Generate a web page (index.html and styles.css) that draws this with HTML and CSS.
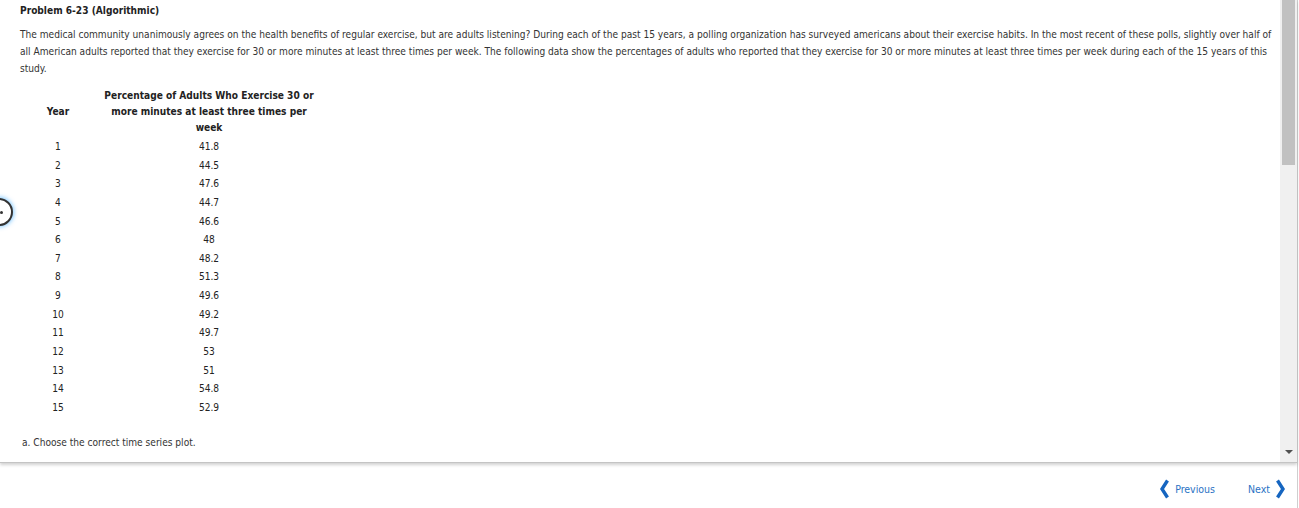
FILE: index.html
```html
<!DOCTYPE html>
<html>
<head>
  <meta charset="utf-8">
  <link rel="stylesheet" href="styles.css">
  <title>Problem 6-23 (Algorithmic)</title>
</head>
<body>

<div class="page">
  <div class="frame">
    <div class="content">
      <div class="title">Problem 6-23 (Algorithmic)</div>
      <p class="intro">The medical community unanimously agrees on the health benefits of regular exercise, but are adults listening? During each of the past 15 years, a polling organization has surveyed americans about their exercise habits. In the most recent of these polls, slightly over half of all American adults reported that they exercise for 30 or more minutes at least three times per week. The following data show the percentages of adults who reported that they exercise for 30 or more minutes at least three times per week during each of the 15 years of this study.</p>

      <table class="data">
        <thead>
          <tr>
            <th class="yearCol">Year</th>
            <th class="pctCol">Percentage of Adults Who Exercise 30 or more minutes at least three times per week</th>
          </tr>
        </thead>
        <tbody>
          <tr><td>1</td><td>41.8</td></tr>
          <tr><td>2</td><td>44.5</td></tr>
          <tr><td>3</td><td>47.6</td></tr>
          <tr><td>4</td><td>44.7</td></tr>
          <tr><td>5</td><td>46.6</td></tr>
          <tr><td>6</td><td>48</td></tr>
          <tr><td>7</td><td>48.2</td></tr>
          <tr><td>8</td><td>51.3</td></tr>
          <tr><td>9</td><td>49.6</td></tr>
          <tr><td>10</td><td>49.2</td></tr>
          <tr><td>11</td><td>49.7</td></tr>
          <tr><td>12</td><td>53</td></tr>
          <tr><td>13</td><td>51</td></tr>
          <tr><td>14</td><td>54.8</td></tr>
          <tr><td>15</td><td>52.9</td></tr>
        </tbody>
      </table>

      <p class="question">a. Choose the correct time series plot.</p>
    </div>

    <div class="scrollbar">
      <div class="thumb"></div>
      <div class="arrowDown"></div>
    </div>

    <div class="focusRing"><span class="dot"></span></div>
  </div>

  <div class="navBar">
    <a class="navLink">
      <svg class="chev" width="9" height="20" viewBox="0 0 9 20"><polyline points="7.5,1.5 2,10 7.5,18.5" fill="none" stroke="#1565c0" stroke-width="3.4" stroke-linejoin="miter"/></svg>
      <span>Previous</span>
    </a>
    <a class="navLink next">
      <span>Next</span>
      <svg class="chev" width="9" height="20" viewBox="0 0 9 20"><polyline points="1.5,1.5 7,10 1.5,18.5" fill="none" stroke="#1565c0" stroke-width="3.4" stroke-linejoin="miter"/></svg>
    </a>
  </div>
</div>

</body>
</html>
```

FILE: styles.css
```css
html, body {
  margin: 0;
  height: 100%;
  background-color: #ffffff;
}

body {
  font-family: 'DejaVu Sans Condensed', 'DejaVu Sans', sans-serif;
  font-size: 10.1px;
  color: #333333;
}

.page {
  width: 1297px;
  height: 508px;
  border-right: 1px solid #cfcfcf;
  display: flex;
  flex-direction: column;
}

.frame {
  position: relative;
  height: 462px;
  display: flex;
  border-bottom: 1px solid #c4c4c4;
  box-shadow: 0 2px 3px rgba(0, 0, 0, 0.18);
  overflow: hidden;
  z-index: 1;
}

.content {
  flex: 1;
  padding: 2px 3px 0 20px;
}

.title {
  font-weight: bold;
  line-height: 17px;
  color: #222222;
}

.intro {
  margin: 7px 0 0 0;
  line-height: 17px;
}

.data {
  border-collapse: collapse;
  margin-top: 11px;
}

.data th {
  font-weight: bold;
  line-height: 16px;
  padding: 0 0 2px 0;
  color: #222222;
}

.yearCol {
  width: 76px;
}

.data th.pctCol {
  width: 214px;
  padding: 0 2px 2px 6px;
}

.data td {
  text-align: center;
  line-height: 18.64px;
  padding: 0;
  color: #222222;
}

.data td + td {
  padding-left: 4px;
}

.question {
  margin: 16px 0 0 2px;
  line-height: 17px;
}

.scrollbar {
  width: 17px;
  background-color: #f0f0f0;
  position: relative;
  display: flex;
  flex-direction: column;
  align-items: center;
}

.thumb {
  width: 13px;
  height: 165px;
  background-color: #c1c1c1;
}

.arrowDown {
  position: absolute;
  bottom: 8px;
  left: 5px;
  width: 0;
  height: 0;
  border-left: 4px solid transparent;
  border-right: 4px solid transparent;
  border-top: 4px solid #505050;
}

.focusRing {
  position: absolute;
  left: -15px;
  top: 198px;
  width: 24px;
  height: 24px;
  border: 2px solid #333333;
  border-radius: 50%;
  box-shadow: 0 0 4px 1px rgba(80, 180, 255, 0.7);
  background-color: #ffffff;
}

.dot {
  position: absolute;
  left: 13px;
  top: 11px;
  width: 3px;
  height: 3px;
  border-radius: 50%;
  background-color: #333333;
}

.navBar {
  flex: 1;
  display: flex;
  justify-content: flex-end;
  align-items: center;
  gap: 33px;
  padding: 7px 12px 0 0;
}

.navLink {
  display: flex;
  align-items: center;
  gap: 6px;
  font-size: 10.5px;
  color: #2a72c4;
  cursor: pointer;
}

.chev {
  display: block;
}
```
